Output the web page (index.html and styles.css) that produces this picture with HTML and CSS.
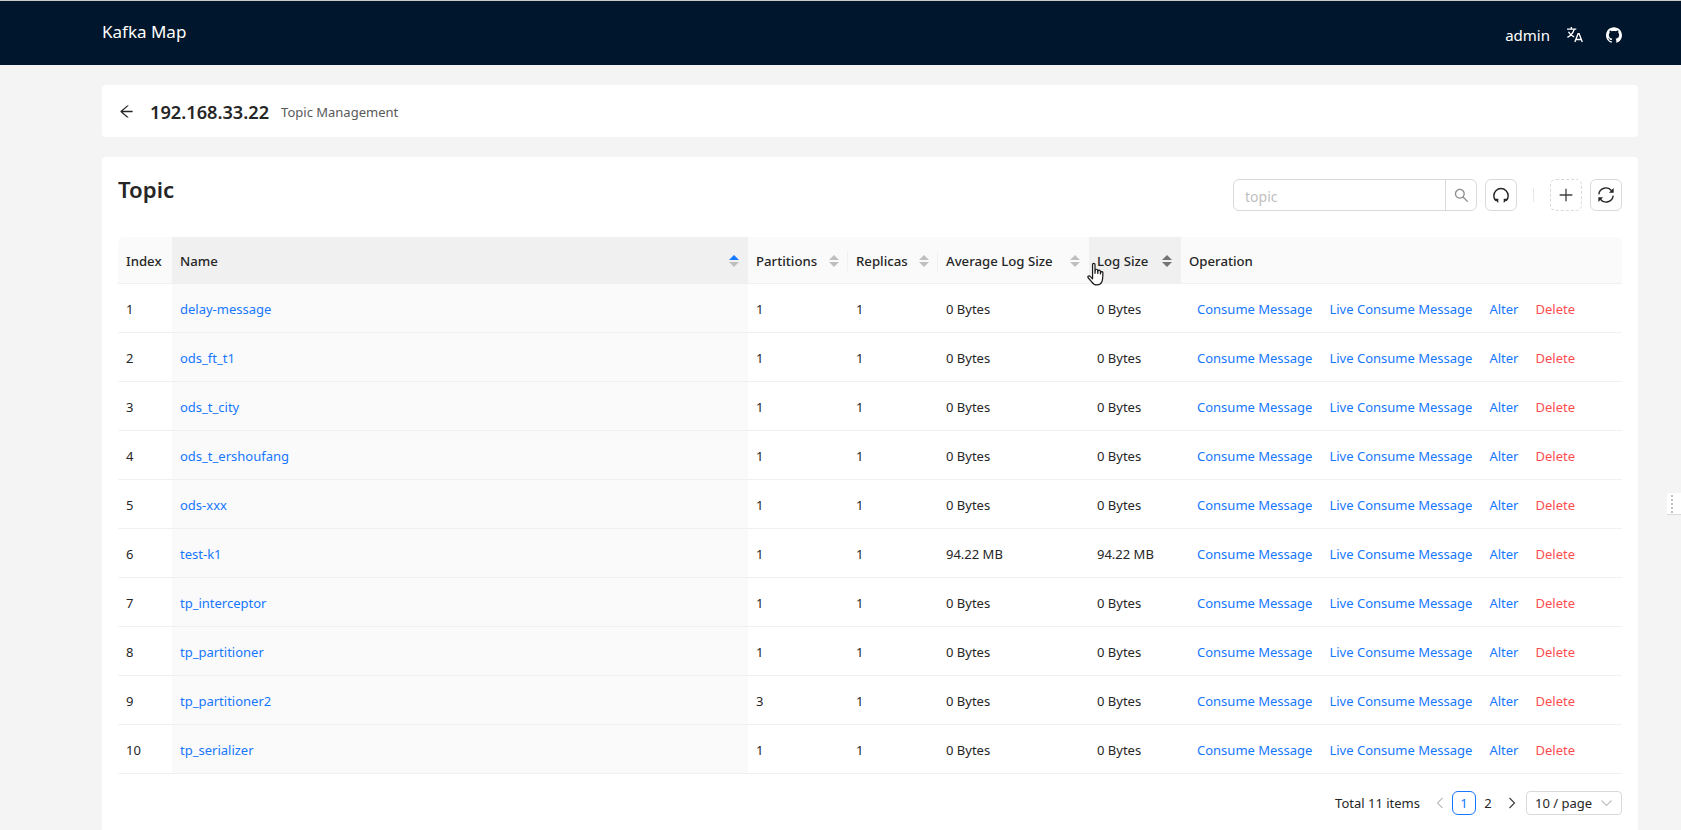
FILE: index.html
```html
<!DOCTYPE html>
<html lang="en">
<head>
<meta charset="utf-8">
<title>Kafka Map</title>
<link rel="stylesheet" href="styles.css">
</head>
<body>
<header class="topbar">
  <div class="brand">Kafka Map</div>
  <div class="topbar-right">
    <span class="user">admin</span>
    <svg class="lang-icon" viewBox="0 0 24 24" fill="none" stroke="#fff" stroke-width="1.900"><path d="M1.500 4.500h13M7.500 1.500v3M11.500 4.500c-1 5-4.500 9-9.500 11.500M3.500 8c1.500 3.500 4.500 5.500 8 7.500"/><path d="M12.500 22.500l4.500-11.500h1.500l4.500 11.500M14 19h7.500"/></svg>
    <svg class="gh-icon" viewBox="64 76 896 872" fill="#fff"><path d="M511.600 76.300C264.300 76.200 64 276.400 64 523.500 64 718.900 189.300 885 363.800 946c23.500 5.900 19.900-10.800 19.900-22.200v-77.500c-135.700 15.900-141.200-73.900-150.300-88.900C215 726 171.500 718 184.500 703c30.900-15.900 62.400 4 98.900 57.900 26.400 39.100 77.900 32.500 104 26 5.700-23.500 17.900-44.500 34.700-60.800-140.600-25.200-199.200-111-199.200-213 0-49.500 16.300-95 48.300-131.700-20.400-60.500 1.900-112.300 4.900-120 58.100-5.200 118.500 41.600 123.200 45.300 33-8.900 70.700-13.600 112.900-13.600 42.400 0 80.200 4.900 113.500 13.900 11.300-8.600 67.300-48.800 121.300-43.900 2.900 7.700 24.700 58.300 5.500 118 32.400 36.800 48.900 82.700 48.900 132.300 0 102.200-59 188.100-200 212.900a127.500 127.500 0 0 1 38.100 91v112.500c.8 9 0 17.900 15 17.900 177.100-59.700 304.600-227 304.600-424.100 0-247.200-200.400-447.300-447.500-447.300z"/></svg>
  </div>
</header>
<main class="content">
  <section class="page-head">
    <svg class="back" viewBox="0 0 1024 1024" fill="#262626"><path d="M872 474H286.900l350.200-304c5.600-4.900 2.200-14-5.200-14h-88.500c-3.900 0-7.600 1.400-10.500 3.900L155 487.800a31.960 31.960 0 0 0 0 48.300L535.100 866c1.500 1.300 3.300 2 5.200 2h91.500c7.400 0 10.800-9.200 5.200-14L286.900 550H872c4.400 0 8-3.600 8-8v-60c0-4.400-3.600-8-8-8z"/></svg>
    <span class="host">192.168.33.22</span>
    <span class="sub">Topic Management</span>
  </section>
  <section class="card">
    <div class="toolbar">
      <h1 class="title">Topic</h1>
      <div class="tools">
        <div class="search">
          <span class="search-input">topic</span>
          <span class="search-btn"><svg class="ico-search" viewBox="0 0 1024 1024" fill="#8c8c8c"><path d="M909.600 854.500L649.900 594.800C690.200 542.700 712 479 712 412c0-80.200-31.300-155.400-87.900-212.100-56.600-56.700-132-87.900-212.100-87.900s-155.500 31.300-212.100 87.900C143.200 256.500 112 331.800 112 412c0 80.100 31.300 155.500 87.900 212.100C256.500 680.800 331.800 712 412 712c67 0 130.600-21.800 182.700-62l259.700 259.600a8.200 8.200 0 0 0 11.600 0l43.600-43.500a8.200 8.200 0 0 0 0-11.600zM570.400 570.400C528 612.700 471.800 636 412 636s-116-23.300-158.400-65.600C211.300 528 188 471.800 188 412s23.300-116.100 65.600-158.400C296 211.300 352.200 188 412 188s116.100 23.200 158.400 65.600S636 352.200 636 412s-23.300 116.100-65.600 158.400z"/></svg></span>
        </div>
        <button class="icon-btn"><svg class="ico" viewBox="0 0 16 16" fill="none" stroke="#262626" stroke-width="1.300"><path d="M3.500 13.200A6.400 6.400 0 1 1 12.500 13.200"/><path d="M1.800 11.300h3.800v3.800zM10.400 11.300h3.800l-3.800 3.800z" fill="#262626" stroke="none"/></svg></button>
        <span class="divider"></span>
        <button class="icon-btn dashed"><svg class="ico" viewBox="0 0 1024 1024" fill="#404040"><path d="M482 152h60q8 0 8 8v704q0 8-8 8h-60q-8 0-8-8V160q0-8 8-8z"/><path d="M160 474h704q8 0 8 8v60q0 8-8 8H160q-8 0-8-8v-60q0-8 8-8z"/></svg></button>
        <button class="icon-btn"><svg class="ico" viewBox="0 0 16 16" fill="none" stroke="#262626" stroke-width="1.200"><path d="M1.600 7.500A6.400 6.400 0 0 1 13 4.200M14.400 8.500A6.400 6.400 0 0 1 3 11.800"/><path d="M14.800 1.800v4.200h-4.200zM1.200 14.200V10h4.200z" fill="#262626" stroke="none"/></svg></button>
      </div>
    </div>
    <div class="table">
      <div class="row head">
        <div class="c c-idx">Index</div>
        <div class="c c-name sorted">Name<span class="sort"><i class="up on"></i><i class="down"></i></span></div>
        <div class="c c-part sep">Partitions<span class="sort"><i class="up"></i><i class="down"></i></span></div>
        <div class="c c-rep sep">Replicas<span class="sort"><i class="up"></i><i class="down"></i></span></div>
        <div class="c c-avg">Average Log Size<span class="sort"><i class="up"></i><i class="down"></i></span></div>
        <div class="c c-log sorted">Log Size<span class="sort dark"><i class="up"></i><i class="down"></i></span></div>
        <div class="c c-op">Operation</div>
      </div>
      <div class="row"><div class="c c-idx">1</div><div class="c c-name sorted-cell"><a class="link">delay-message</a></div><div class="c c-part">1</div><div class="c c-rep">1</div><div class="c c-avg">0 Bytes</div><div class="c c-log">0 Bytes</div><div class="c c-op ops"><a class="link">Consume Message</a><a class="link">Live Consume Message</a><a class="link">Alter</a><a class="danger">Delete</a></div></div>
      <div class="row"><div class="c c-idx">2</div><div class="c c-name sorted-cell"><a class="link">ods_ft_t1</a></div><div class="c c-part">1</div><div class="c c-rep">1</div><div class="c c-avg">0 Bytes</div><div class="c c-log">0 Bytes</div><div class="c c-op ops"><a class="link">Consume Message</a><a class="link">Live Consume Message</a><a class="link">Alter</a><a class="danger">Delete</a></div></div>
      <div class="row"><div class="c c-idx">3</div><div class="c c-name sorted-cell"><a class="link">ods_t_city</a></div><div class="c c-part">1</div><div class="c c-rep">1</div><div class="c c-avg">0 Bytes</div><div class="c c-log">0 Bytes</div><div class="c c-op ops"><a class="link">Consume Message</a><a class="link">Live Consume Message</a><a class="link">Alter</a><a class="danger">Delete</a></div></div>
      <div class="row"><div class="c c-idx">4</div><div class="c c-name sorted-cell"><a class="link">ods_t_ershoufang</a></div><div class="c c-part">1</div><div class="c c-rep">1</div><div class="c c-avg">0 Bytes</div><div class="c c-log">0 Bytes</div><div class="c c-op ops"><a class="link">Consume Message</a><a class="link">Live Consume Message</a><a class="link">Alter</a><a class="danger">Delete</a></div></div>
      <div class="row"><div class="c c-idx">5</div><div class="c c-name sorted-cell"><a class="link">ods-xxx</a></div><div class="c c-part">1</div><div class="c c-rep">1</div><div class="c c-avg">0 Bytes</div><div class="c c-log">0 Bytes</div><div class="c c-op ops"><a class="link">Consume Message</a><a class="link">Live Consume Message</a><a class="link">Alter</a><a class="danger">Delete</a></div></div>
      <div class="row"><div class="c c-idx">6</div><div class="c c-name sorted-cell"><a class="link">test-k1</a></div><div class="c c-part">1</div><div class="c c-rep">1</div><div class="c c-avg">94.22 MB</div><div class="c c-log">94.22 MB</div><div class="c c-op ops"><a class="link">Consume Message</a><a class="link">Live Consume Message</a><a class="link">Alter</a><a class="danger">Delete</a></div></div>
      <div class="row"><div class="c c-idx">7</div><div class="c c-name sorted-cell"><a class="link">tp_interceptor</a></div><div class="c c-part">1</div><div class="c c-rep">1</div><div class="c c-avg">0 Bytes</div><div class="c c-log">0 Bytes</div><div class="c c-op ops"><a class="link">Consume Message</a><a class="link">Live Consume Message</a><a class="link">Alter</a><a class="danger">Delete</a></div></div>
      <div class="row"><div class="c c-idx">8</div><div class="c c-name sorted-cell"><a class="link">tp_partitioner</a></div><div class="c c-part">1</div><div class="c c-rep">1</div><div class="c c-avg">0 Bytes</div><div class="c c-log">0 Bytes</div><div class="c c-op ops"><a class="link">Consume Message</a><a class="link">Live Consume Message</a><a class="link">Alter</a><a class="danger">Delete</a></div></div>
      <div class="row"><div class="c c-idx">9</div><div class="c c-name sorted-cell"><a class="link">tp_partitioner2</a></div><div class="c c-part">3</div><div class="c c-rep">1</div><div class="c c-avg">0 Bytes</div><div class="c c-log">0 Bytes</div><div class="c c-op ops"><a class="link">Consume Message</a><a class="link">Live Consume Message</a><a class="link">Alter</a><a class="danger">Delete</a></div></div>
      <div class="row"><div class="c c-idx">10</div><div class="c c-name sorted-cell"><a class="link">tp_serializer</a></div><div class="c c-part">1</div><div class="c c-rep">1</div><div class="c c-avg">0 Bytes</div><div class="c c-log">0 Bytes</div><div class="c c-op ops"><a class="link">Consume Message</a><a class="link">Live Consume Message</a><a class="link">Alter</a><a class="danger">Delete</a></div></div>
    </div>
    <div class="pager">
      <span class="total">Total 11 items</span>
      <svg class="chev" viewBox="0 0 10 12" fill="none" stroke="#bfbfbf" stroke-width="1.200"><path d="M7.500 1L2.500 6l5 5"/></svg>
      <span class="page on">1</span>
      <span class="page">2</span>
      <svg class="chev next" viewBox="0 0 10 12" fill="none" stroke="#404040" stroke-width="1.200"><path d="M2.500 1l5 5-5 5"/></svg>
      <span class="size">10 / page<svg class="caret" viewBox="0 0 12 8" fill="none" stroke="#bfbfbf" stroke-width="1.100"><path d="M1 1.500l5 5 5-5"/></svg></span>
    </div>
  </section>
</main>
<svg class="cursor" viewBox="0 0 18 24" fill="#fff" stroke="#1a1a1a" stroke-width="1.100" stroke-linejoin="round"><path d="M5 2.200c0-1.500 2.200-1.500 2.200 0V10l.2-2.700c.2-1.300 2.100-1.200 2.200.1l.1 2.800.2-2.100c.2-1.200 2-1.100 2.100.1l.1 2.400.3-1.400c.3-1.100 1.900-.8 1.900.4 0 3.500-.1 6.500-1 8.300-.7 1.500-2 2.600-4.400 2.600-2.300 0-3.500-.9-4.600-2.800L1 14c-.7-1.300.9-2.300 1.900-1.200L5 15z"/></svg>
<div class="handle"><i></i><i></i><i></i><i></i><i></i></div>
</body>
</html>
```

FILE: styles.css
```css
* { box-sizing: border-box; }
html, body { margin: 0; height: 830px; overflow: hidden; }
body {
  background: #f4f4f4;
  font-family: "Noto Sans", "Open Sans", sans-serif;
  font-size: 13px;
  color: #262626;
  position: relative;
}
.topbar {
  height: 65px;
  background: #00162c;
  border-top: 1px solid #c8c8c8;
  padding: 0 59px 0 102px;
  display: flex;
  align-items: center;
  justify-content: space-between;
  color: #fff;
}
.brand { font-size: 17px; line-height: 24px; margin-top: -2px; }
.topbar-right { display: flex; align-items: center; padding-top: 3px; }
.user { font-size: 15px; margin-right: 16px; }
.lang-icon { width: 17px; height: 17px; margin-right: 23px; }
.gh-icon { width: 16px; height: 16px; }
.content { padding: 20px 43px 0 102px; }
.page-head {
  height: 52px;
  background: #fff;
  border-radius: 4px;
  display: flex;
  align-items: center;
  padding: 2px 16px 0;
  margin-bottom: 20px;
}
.back { width: 17px; height: 17px; margin-right: 15px; margin-top: -2px; }
.host { font-size: 18.2px; font-weight: 600; margin-right: 12px; color: #262626; }
.sub { font-size: 13px; color: #595959; }
.card {
  background: #fff;
  border-radius: 4px 4px 0 0;
  padding: 22px 16px 0;
  height: 680px;
}
.toolbar { display: flex; justify-content: space-between; align-items: flex-start; height: 58px; }
.title { margin: -1px 0 0; font-size: 22.2px; font-weight: 600; line-height: 24px; color: #262626; }
.tools { display: flex; align-items: center; gap: 8px; }
.search { width: 244px; height: 32px; border: 1px solid #d9d9d9; border-radius: 6px; display: flex; }
.search-input { flex: 1; padding-left: 11px; color: #bfbfbf; line-height: 33px; font-size: 14px; }
.search-btn { width: 31px; border-left: 1px solid #d9d9d9; display: flex; align-items: center; justify-content: center; }
.ico-search { width: 17px; height: 17px; }
.ico { width: 18px; height: 18px; }
.icon-btn {
  width: 32px; height: 32px; padding: 0;
  background: #fff;
  border: 1px solid #d9d9d9;
  border-radius: 6px;
  display: flex; align-items: center; justify-content: center;
}
.icon-btn.dashed { border-style: dashed; }
.divider { width: 1px; height: 14px; background: #e8e8e8; margin: 0 8px; }
.table { font-size: 13px; }
.row {
  display: grid;
  grid-template-columns: 54px 576px 100px 90px 151px 92px 1fr;
  height: 49px;
  border-bottom: 1px solid #f0f0f0;
  align-items: stretch;
}
.row.head {
  height: 47px;
  background: #fafafa;
  border-radius: 6px 6px 0 0;
  font-weight: 500;
  font-size: 13.2px;
  color: #262626;
}
.c { padding: 1px 8px 0; display: flex; align-items: center; position: relative; white-space: nowrap; }
.head .c { justify-content: space-between; }
.head .c-idx, .head .c-op { justify-content: flex-start; }
.sorted { background: #f0f0f0; }
.sorted-cell { background: #fafafa; }
.sep::after {
  content: ""; position: absolute; right: 0; top: 14px; height: 20px; width: 1px; background: #f0f0f0;
}
.sort { display: flex; flex-direction: column; gap: 2px; margin-right: 1px; }
.sort i { display: block; width: 0; height: 0; border-left: 5px solid transparent; border-right: 5px solid transparent; }
.sort .up { border-bottom: 5px solid #bfbfbf; }
.sort .down { border-top: 5px solid #bfbfbf; }
.sort .up.on { border-bottom-color: #1677ff; }
.sort.dark .up { border-bottom-color: #737373; }
.sort.dark .down { border-top-color: #737373; }
.link { color: #1677ff; }
.danger { color: #ff4d4f; }
.ops { gap: 17px; padding-left: 16px; }
.pager { display: flex; align-items: center; justify-content: flex-end; height: 57px; font-size: 13px; }
.total { margin-right: 10px; }
.chev { width: 10px; height: 12px; margin: 0 7px 0 5px; }
.chev.next { margin: 0 5px 0 7px; }
.page { min-width: 24px; height: 24px; line-height: 22px; text-align: center; border: 1px solid transparent; border-radius: 6px; }
.page.on { border-color: #1677ff; color: #1677ff; }
.size {
  width: 96px; height: 24px; margin-left: 4px;
  border: 1px solid #d9d9d9; border-radius: 4px;
  display: flex; align-items: center; justify-content: space-between;
  padding: 0 8px 0 8px;
}
.caret { width: 13px; height: 8px; }
.cursor { position: absolute; left: 1087px; top: 262px; width: 20px; height: 27px; }
.handle {
  position: absolute; right: 0; top: 493px; width: 14px; height: 22px;
  background: #fff; border-bottom: 1px solid #d9d9d9;
  display: flex; flex-direction: column; gap: 2px; padding: 2px 0 0 4px;
}
.handle i { display: block; width: 2px; height: 2px; background: #bfbfbf; }
```
